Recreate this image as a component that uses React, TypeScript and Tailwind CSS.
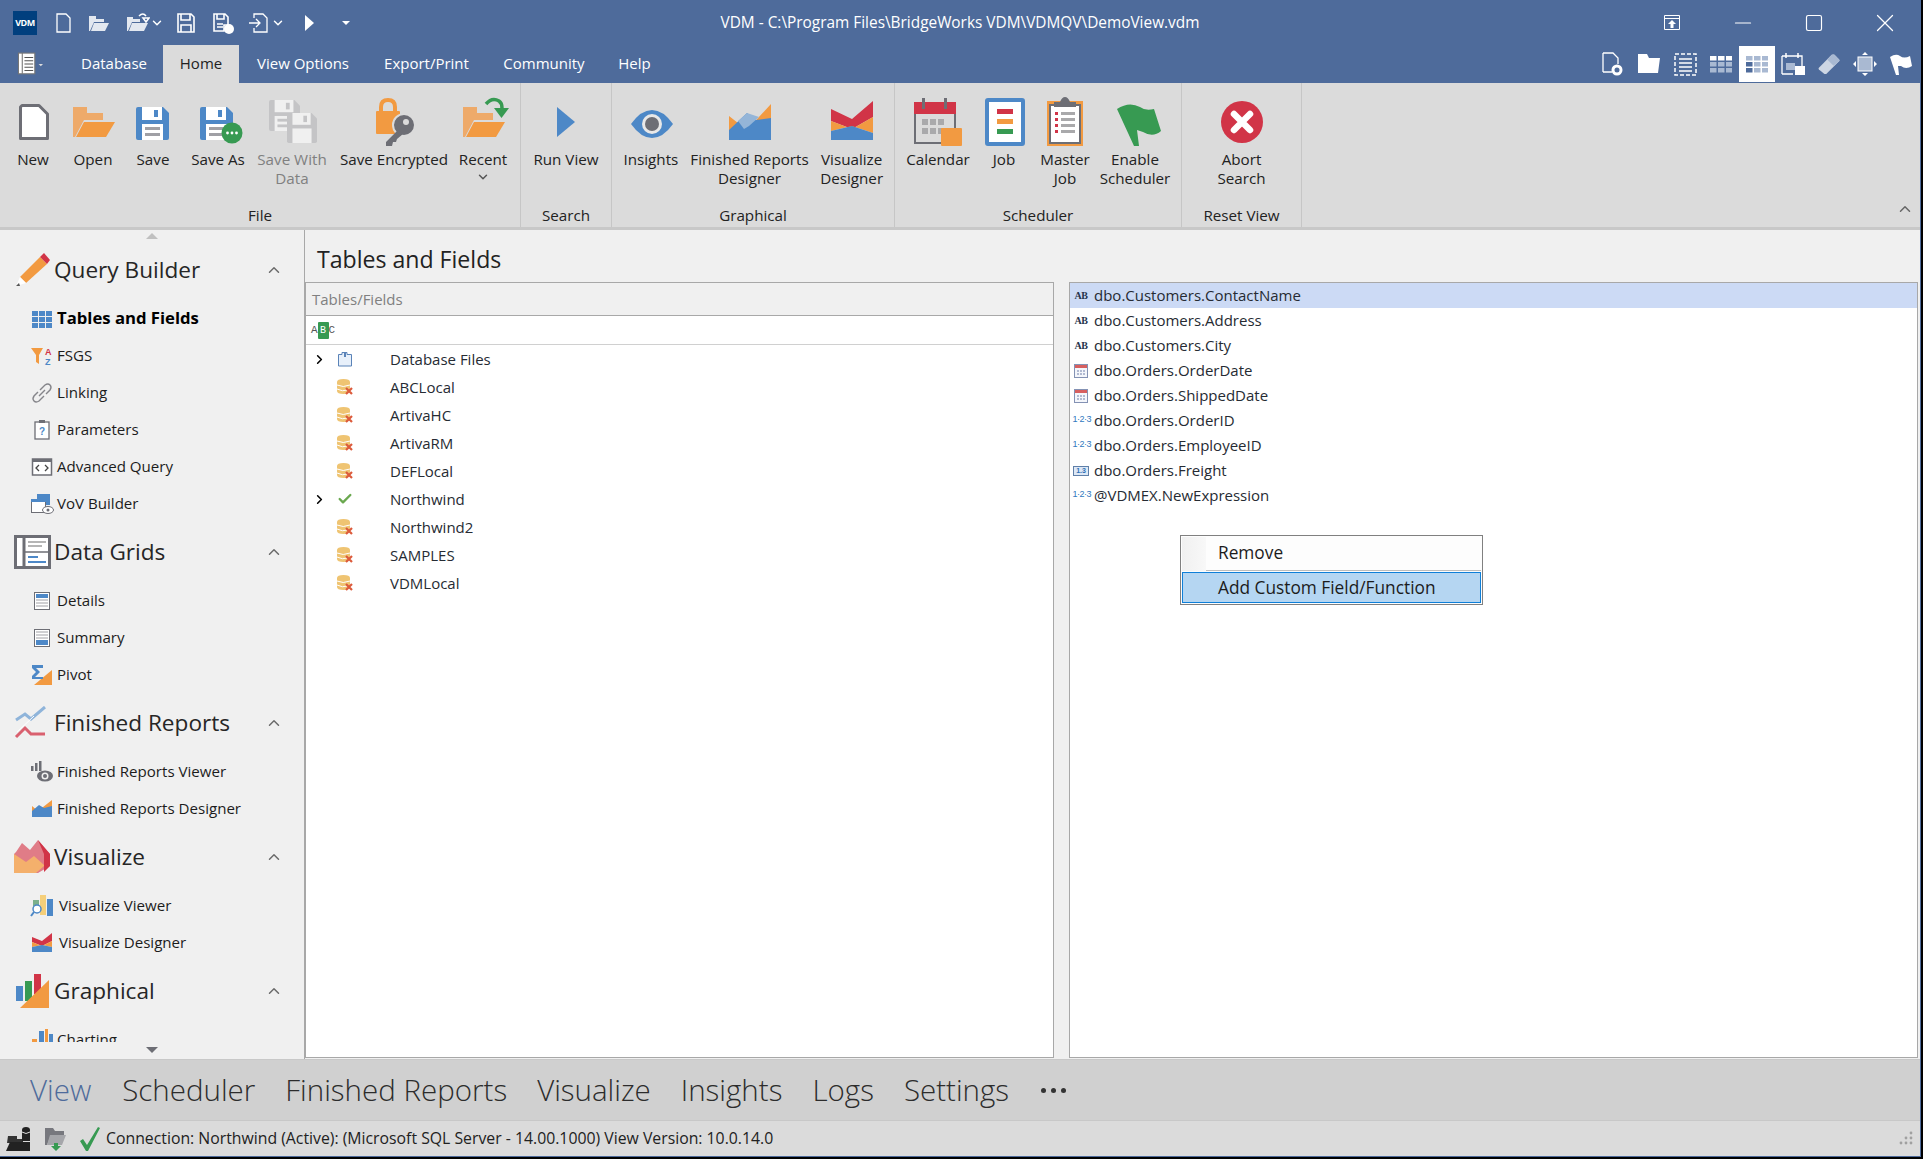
import { ReactNode } from "react";
import { ChevronDown, ChevronRight, ChevronUp, Check, Minus, Square, X } from "lucide-react";

const BLUE = "#4d88c7";
const ORANGE = "#f29a41";
const RED = "#d13447";
const GREEN = "#379a52";
const GRAY = "#6d6e75";

// floppy shape reused by the save icons
function Floppy({ x, y, s, fill, inner = "#fff", bar = "#a0a0a5" }: { x: number; y: number; s: number; fill: string; inner?: string; bar?: string }) {
  const u = s / 33;
  return (
    <g transform={`translate(${x} ${y}) scale(${u})`}>
      <path d="M2 0H27L33 6V31Q33 33 31 33H2Q0 33 0 31V2Q0 0 2 0Z" fill={fill} />
      <rect x="6" y="0" width="20" height="13" fill={inner} />
      <rect x="18" y="3" width="4" height="7" fill={fill} />
      <rect x="6" y="17" width="21" height="16" fill={inner} />
      <rect x="9" y="20" width="15" height="3" fill={bar} />
      <rect x="9" y="26" width="15" height="3" fill={bar} />
    </g>
  );
}

function FolderBig() {
  return (
    <>
      <path d="M8 14H22V20H38V27H19L10 44H8Z" fill="#eeaa6a" />
      <path d="M19 29H50L41 44H11Z" fill={ORANGE} />
    </>
  );
}

const ribbonIcons: Record<string, ReactNode> = {
  new: <path d="M17 12.5H34L42.5 21V45.5H15.5V14Z" fill="#fff" stroke={GRAY} strokeWidth="3" strokeLinejoin="round" />,
  open: <FolderBig />,
  save: <Floppy x={11} y={14} s={33} fill={BLUE} />,
  saveAs: (
    <>
      <Floppy x={10} y={14} s={33} fill={BLUE} />
      <circle cx="42" cy="40" r="10.5" fill={GREEN} />
      <circle cx="37.5" cy="40" r="1.4" fill="#fff" />
      <circle cx="42" cy="40" r="1.4" fill="#fff" />
      <circle cx="46.5" cy="40" r="1.4" fill="#fff" />
    </>
  ),
  saveData: (
    <>
      <Floppy x={5} y={7} s={31} fill="#c4c4c6" inner="#f0f0f0" bar="#c4c4c6" />
      <Floppy x={23} y={20} s={30} fill="#c4c4c6" inner="#f0f0f0" bar="#f0f0f0" />
    </>
  ),
  encrypted: (
    <>
      <path d="M15 19V14Q15 7 22 7Q29 7 29 14V19" fill="none" stroke={ORANGE} strokeWidth="4" />
      <rect x="10" y="18" width="24" height="23" rx="1" fill={ORANGE} />
      <circle cx="38" cy="32" r="11" fill={GRAY} stroke="#dbdbdb" strokeWidth="2" />
      <path d="M32 37L20 49V53H26L27 49H30L31 46L37 41Z" fill={GRAY} />
      <circle cx="40" cy="29" r="3" fill="#dbdbdb" />
    </>
  ),
  recent: (
    <>
      <FolderBig />
      <path d="M31 11Q37 4 44 8Q47 10 47 15" fill="none" stroke={GREEN} strokeWidth="3.5" />
      <path d="M39 15H54L46.5 25Z" fill={GREEN} />
    </>
  ),
  run: <path d="M19 14L37 29L19 44Z" fill={BLUE} />,
  insights: (
    <>
      <path d="M8 31Q18 17 29 17Q40 17 50 31Q40 45 29 45Q18 45 8 31Z" fill={BLUE} />
      <circle cx="29" cy="31" r="10" fill="#e8e8e8" />
      <circle cx="29" cy="31" r="7" fill={GRAY} />
    </>
  ),
  report: (
    <>
      <path d="M7 23L25 37L49 11V47H7Z" fill={ORANGE} />
      <path d="M7 37L25 20L34 27L49 25V47H7Z" fill={BLUE} />
      <path d="M16 28L25 20L37 24L27 33L22 36Z" fill="#94b5d8" />
    </>
  ),
  visualize: (
    <>
      <path d="M7 16L28 26L49 8V24L28 36L7 28Z" fill={RED} />
      <path d="M7 28L28 36L49 24V40L28 33L7 38Z" fill={ORANGE} />
      <path d="M7 38L28 33L49 40V47H7Z" fill={BLUE} />
    </>
  ),
  calendar: (
    <>
      <rect x="5" y="10" width="40" height="40" fill="#dbdbdb" stroke={GRAY} strokeWidth="2" />
      <rect x="4" y="9" width="42" height="12" fill={RED} />
      <rect x="12" y="5" width="3" height="11" fill={GRAY} />
      <rect x="34" y="5" width="3" height="11" fill={GRAY} />
      {[12, 20, 28].map((x) => (
        <g key={x}>
          <rect x={x} y="26" width="6" height="6" fill="#a9a9ab" />
          <rect x={x} y="35" width="6" height="6" fill="#a9a9ab" />
        </g>
      ))}
      <rect x="31" y="35" width="21" height="18" rx="1" fill={ORANGE} />
    </>
  ),
  job: (
    <>
      <rect x="11" y="7" width="36" height="44" rx="1" fill="#fff" stroke={BLUE} strokeWidth="4" />
      <rect x="21" y="16" width="16" height="5" fill={RED} />
      <rect x="21" y="26" width="16" height="5" fill={ORANGE} />
      <rect x="21" y="36" width="16" height="5" fill={GREEN} />
    </>
  ),
  master: (
    <>
      <rect x="10" y="8" width="36" height="45" fill={ORANGE} />
      <rect x="13" y="12" width="30" height="38" fill="#fff" stroke={GRAY} strokeWidth="2" />
      <path d="M17 14V9H23Q25 4 28 4Q31 4 33 9H39V14Z" fill={GRAY} />
      {[19, 25, 31, 37].map((y) => (
        <g key={y}>
          <rect x="18" y={y} width="3" height="3" fill={RED} />
          <rect x="24" y={y} width="14" height="3" fill="#a9a9ab" />
        </g>
      ))}
    </>
  ),
  flag: (
    <path d="M10 16Q22 8 33 14Q38 18 47 16L54 38Q46 45 36 39L30 37L32 53H27Z" fill={GREEN} />
  ),
  abort: (
    <>
      <ellipse cx="28" cy="29" rx="21" ry="21" fill={RED} />
      <path d="M20 21L36 37M36 21L20 37" stroke="#fff" strokeWidth="6.5" strokeLinecap="round" />
    </>
  ),
};

const ribbonGroups = [
  {
    name: "File",
    w: "w-[521px]",
    pl: "pl-[3px]",
    buttons: [
      { icon: "new", w: "w-[60px]", label: ["New"] },
      { icon: "open", w: "w-[60px]", label: ["Open"] },
      { icon: "save", w: "w-[60px]", label: ["Save"] },
      { icon: "saveAs", w: "w-[70px]", label: ["Save As"] },
      { icon: "saveData", w: "w-[78px]", label: ["Save With", "Data"], disabled: true },
      { icon: "encrypted", w: "w-[126px]", label: ["Save Encrypted"] },
      { icon: "recent", w: "w-[52px]", label: ["Recent"], menu: true },
    ],
  },
  { name: "Search", w: "w-[91px]", pl: "", buttons: [{ icon: "run", w: "w-[90px]", label: ["Run View"] }] },
  {
    name: "Graphical",
    w: "w-[283px]",
    pl: "",
    buttons: [
      { icon: "insights", w: "w-[78px]", label: ["Insights"] },
      { icon: "report", w: "w-[120px]", label: ["Finished Reports", "Designer"] },
      { icon: "visualize", w: "w-[85px]", label: ["Visualize", "Designer"] },
    ],
  },
  {
    name: "Scheduler",
    w: "w-[287px]",
    pl: "",
    buttons: [
      { icon: "calendar", w: "w-[86px]", label: ["Calendar"] },
      { icon: "job", w: "w-[46px]", label: ["Job"] },
      { icon: "master", w: "w-[76px]", label: ["Master", "Job"] },
      { icon: "flag", w: "w-[64px]", label: ["Enable", "Scheduler"] },
    ],
  },
  { name: "Reset View", w: "w-[120px]", pl: "", buttons: [{ icon: "abort", w: "w-[120px]", label: ["Abort", "Search"] }] },
];

function QatIcon({ w, children }: { w: string; children: ReactNode }) {
  return (
    <svg viewBox="0 0 24 24" className={`${w} h-[24px] shrink-0`}>
      {children}
    </svg>
  );
}

function TitleBar() {
  return (
    <div className="grid h-[45px] grid-cols-[1fr_auto_1fr] items-center bg-[#4e6b9b] text-white">
      <div className="flex items-center pl-[13px]">
        <div className="flex h-[24px] w-[24px] items-center justify-center bg-[#013f7e] text-[9px] font-bold tracking-tighter">VDM</div>
        <div className="ml-[14px] flex items-center">
          <QatIcon w="w-[24px]">
            <path d="M6 3H15L19 7V21H6Z" fill="none" stroke="#fff" strokeWidth="1.3" />
          </QatIcon>
          <QatIcon w="w-[24px] ml-[12px]">
            <path d="M2 5H9V8H17V11H7L3 20H2Z M7 12H22L18 20H4Z" fill="#e3e8f0" />
          </QatIcon>
          <QatIcon w="w-[24px] ml-[15px]">
            <path d="M1 6H7V8H14V11H6L2 20H1Z M6 12H22L18 20H3Z" fill="#e3e8f0" />
            <path d="M13 5Q17 1 20 5M17 7H23L20 11Z" fill="none" stroke="#fff" strokeWidth="1.5" />
          </QatIcon>
          <ChevronDown className="h-[14px] w-[14px]" strokeWidth={2.5} />
          <QatIcon w="w-[24px] ml-[10px]">
            <path d="M4 3H17L20 6V21H4Z M7 3V9H16V3 M7 14V21H17V14Z" fill="none" stroke="#fff" strokeWidth="1.6" />
          </QatIcon>
          <QatIcon w="w-[24px] ml-[13px]">
            <path d="M3 3H14L17 6V14H13V20H3Z M6 3V8H13V3 M6 13H12 M6 16H12" fill="none" stroke="#fff" strokeWidth="1.6" />
            <circle cx="18" cy="18" r="5" fill="#fff" />
          </QatIcon>
          <QatIcon w="w-[24px] ml-[12px]">
            <path d="M7 7V3H16L20 7V21H7V17 M2 12H12M9 8L13 12L9 16" fill="none" stroke="#fff" strokeWidth="1.3" />
          </QatIcon>
          <ChevronDown className="h-[14px] w-[14px]" strokeWidth={2.5} />
          <QatIcon w="w-[24px] ml-[12px]">
            <path d="M8 4L17 12L8 20Z" fill="#fff" />
          </QatIcon>
          <QatIcon w="w-[24px] ml-[13px]">
            <path d="M8 10H16L12 14Z" fill="#fff" />
          </QatIcon>
        </div>
      </div>
      <div className="text-[15.4px] leading-none">VDM - C:\Program Files\BridgeWorks VDM\VDMQV\DemoView.vdm</div>
      <div className="flex items-center justify-end">
        <div className="flex w-[71px] justify-center">
          <svg viewBox="0 0 16 15" className="h-[15px] w-[16px]">
            <path d="M.5.5H15.5V14.5H.5ZM.5 3.5H15.5" fill="none" stroke="#fff" />
            <path d="M8 5L12 9H9.5V13H6.5V9H4Z" fill="#fff" />
          </svg>
        </div>
        <div className="flex w-[71px] justify-center">
          <Minus className="h-[26px] w-[26px]" strokeWidth={1} />
        </div>
        <div className="flex w-[71px] justify-center">
          <Square className="h-[20px] w-[20px]" strokeWidth={1.4} />
        </div>
        <div className="flex w-[71px] justify-center">
          <X className="h-[30px] w-[30px]" strokeWidth={1} />
        </div>
      </div>
    </div>
  );
}

const tabs = [
  { name: "Database", w: "w-[98px]" },
  { name: "Home", w: "w-[76px]", active: true },
  { name: "View Options", w: "w-[128px]" },
  { name: "Export/Print", w: "w-[119px]" },
  { name: "Community", w: "w-[116px]" },
  { name: "Help", w: "w-[65px]" },
];

function GridGlyph({ active }: { active?: boolean }) {
  const cols = [0, 8, 16];
  const rows = [0, 6, 12];
  return (
    <svg viewBox="0 0 22 17" className="h-[17px] w-[22px]">
      {rows.map((y, r) =>
        cols.map((x, c) => (
          <rect
            key={`${r}-${c}`}
            x={x}
            y={y}
            width="6.5"
            height="4.5"
            fill={active ? (c === 0 && r > 0 ? "#4e6b9b" : "#a9b9d2") : r === 0 ? "#fff" : "#a9b9d2"}
          />
        )),
      )}
    </svg>
  );
}

function TabRow() {
  return (
    <div className="flex h-[38px] items-stretch bg-[#4e6b9b]">
      <div className="flex w-[65px] items-center pl-[17px]">
        <svg viewBox="0 0 24 22" className="h-[24px] w-[28px]">
          <rect x="0.5" y="1" width="15" height="19" fill="#fff" stroke="#777" />
          <path d="M4 1V20" stroke="#777" />
          <path d="M6 5H14M6 8H14M6 11H14M6 14H14M6 17H14" stroke="#555" />
          <path d="M19 11H23L21 13Z" fill="#ddd" />
        </svg>
      </div>
      {tabs.map((t) => (
        <div
          key={t.name}
          className={`flex items-center justify-center pb-[1px] text-[15px] ${t.w} ${t.active ? "bg-[#dbdbdb] text-[#222]" : "text-white"}`}
        >
          {t.name}
        </div>
      ))}
      <div className="ml-auto flex items-center pr-[1px]">
        <div className="flex h-[36px] w-[36px] items-center justify-center">
          <svg viewBox="0 0 22 24" className="h-[24px] w-[22px]">
            <path d="M1 1H11L16 6V12M10 20H1Z" fill="none" stroke="#fff" strokeWidth="1.3" />
            <path d="M1 1V20" stroke="#fff" strokeWidth="1.3" />
            <circle cx="15" cy="18" r="4" fill="none" stroke="#fff" strokeWidth="3" />
          </svg>
        </div>
        <div className="flex h-[36px] w-[36px] items-center justify-center">
          <svg viewBox="0 0 22 20" className="h-[20px] w-[22px]">
            <path d="M0 0H9L11 4H22L20 19H0Z" fill="#fff" />
          </svg>
        </div>
        <div className="flex h-[36px] w-[36px] items-center justify-center">
          <svg viewBox="0 0 23 23" className="h-[23px] w-[23px]">
            <rect x="1" y="1" width="21" height="21" fill="none" stroke="#fff" strokeWidth="1.5" strokeDasharray="4 2" />
            <path d="M5 6H18M5 10H18M5 14H18M5 18H18" stroke="#fff" strokeWidth="1.5" />
          </svg>
        </div>
        <div className="flex h-[36px] w-[36px] items-center justify-center">
          <GridGlyph />
        </div>
        <div className="flex h-[36px] w-[36px] items-center justify-center bg-white">
          <GridGlyph active />
        </div>
        <div className="flex h-[36px] w-[36px] items-center justify-center">
          <svg viewBox="0 0 24 24" className="h-[24px] w-[24px]">
            <path d="M1 4H21V15M12 22H1Z" fill="none" stroke="#fff" strokeWidth="1.3" />
            <path d="M1 4V22" stroke="#fff" strokeWidth="1.3" />
            <path d="M5 1V6M17 1V6" stroke="#fff" strokeWidth="1.5" />
            <rect x="5" y="11" width="9" height="7" fill="#a9b9d2" />
            <rect x="14" y="14" width="10" height="9" fill="#fff" />
          </svg>
        </div>
        <div className="flex h-[36px] w-[36px] items-center justify-center">
          <svg viewBox="0 0 24 24" className="h-[22px] w-[22px]">
            <path d="M1 16L15 2Q17 1 18 2L23 7Q24 8 23 9L9 23Q8 23 7 23L1 18Q0 17 1 16Z" fill="#cdd6e4" />
            <path d="M15 2Q17 1 18 2L23 7Q24 8 23 9L17 14L10 7Z" fill="#a9b9d2" />
          </svg>
        </div>
        <div className="flex h-[36px] w-[36px] items-center justify-center">
          <svg viewBox="0 0 24 24" className="h-[24px] w-[24px]">
            <rect x="5" y="5" width="14" height="14" fill="#a9b9d2" stroke="#fff" />
            <path d="M12 0L9 3H15ZM12 24L9 21H15ZM0 12L3 9V15ZM24 12L21 9V15Z" fill="#fff" />
          </svg>
        </div>
        <div className="flex h-[36px] w-[36px] items-center justify-center">
          <svg viewBox="0 0 22 22" className="h-[22px] w-[22px]">
            <path d="M0 4Q6 0 10 3Q14 6 20 3L22 13Q16 17 11 13L8 13L9 22H6Z" fill="#fff" />
          </svg>
        </div>
      </div>
    </div>
  );
}

function Ribbon() {
  return (
    <div className="relative flex h-[147px] border-b-[3px] border-[#c8c8c8] bg-[#dbdbdb] text-[15.2px] text-[#222]">
      {ribbonGroups.map((g) => (
        <div key={g.name} className={`flex flex-col border-r border-[#c6c6c6] ${g.w}`}>
          <div className={`flex flex-1 pt-[10px] ${g.pl}`}>
            {g.buttons.map((b) => {
              const disabled = "disabled" in b && b.disabled;
              const menu = "menu" in b && b.menu;
              return (
                <div key={b.icon} className={`flex flex-col items-center ${b.w}`}>
                  <svg viewBox="0 0 56 56" className="h-[56px] w-[56px] shrink-0 overflow-visible">
                    {ribbonIcons[b.icon]}
                  </svg>
                  <div className={`mt-[1px] whitespace-nowrap text-center leading-[19px] ${disabled ? "text-[#808080]" : ""}`}>
                    {b.label.map((l) => (
                      <div key={l}>{l}</div>
                    ))}
                    {menu && <ChevronDown className="mx-auto mt-[1px] h-[14px] w-[14px] text-[#555]" strokeWidth={2.5} />}
                  </div>
                </div>
              );
            })}
          </div>
          <div className="flex h-[22px] items-center justify-center leading-none">{g.name}</div>
        </div>
      ))}
      <ChevronUp className="absolute bottom-[9px] right-[6px] h-[18px] w-[18px] text-[#666]" strokeWidth={2} />
    </div>
  );
}

const sideIcons: Record<string, ReactNode> = {
  pencil: (
    <>
      <path d="M6 24L26 4L33 11L12 30Z" fill={ORANGE} />
      <path d="M26 4L30 0L36 7L33 11Z" fill={RED} />
      <path d="M6 24L12 30L2 33Z" fill="#fff" />
      <path d="M2 33L5 30L6 33Z" fill="#555" />
    </>
  ),
  grids: (
    <>
      <rect x="1.5" y="1.5" width="34" height="31" fill="#fff" stroke={GRAY} strokeWidth="3" />
      <path d="M10 1V33" stroke={GRAY} strokeWidth="3" />
      <path d="M14 7H32M14 11H28" stroke="#b5b5b5" strokeWidth="2" />
      <path d="M10 17H36" stroke={GRAY} strokeWidth="1.5" />
      <path d="M14 22H24" stroke={BLUE} strokeWidth="2" />
      <path d="M14 27H32" stroke={BLUE} strokeWidth="2" />
    </>
  ),
  trend: (
    <>
      <path d="M2 14L11 8L17 13L31 1" fill="none" stroke="#8fb4da" strokeWidth="3" />
      <path d="M2 31L11 22L17 28H31" fill="none" stroke="#d9606f" strokeWidth="3" />
      <path d="M3 26L20 10" stroke="#fff" strokeWidth="1" />
    </>
  ),
  viz: (
    <>
      <path d="M2 12L8 3L16 10L24 0L36 14L36 26L24 33H0V14Z" fill="#e07c87" />
      <path d="M24 0L36 14V26L30 32V14Z" fill={RED} />
      <path d="M0 14L12 22L20 16L30 25V26L22 33H0Z" fill="#f4b06c" />
    </>
  ),
  graphical: (
    <>
      <rect x="2" y="12" width="7" height="15" fill={BLUE} />
      <rect x="11" y="7" width="7" height="20" fill={GREEN} />
      <rect x="20" y="0" width="7" height="20" fill={RED} />
      <path d="M35 6V34H6Z" fill={ORANGE} />
    </>
  ),
};

const smallIcons: Record<string, ReactNode> = {
  tables: (
    <>
      {[4, 10, 16].map((y) =>
        [2, 9, 16].map((x) => <rect key={`${x}-${y}`} x={x} y={y} width="6" height="5" fill={BLUE} />),
      )}
    </>
  ),
  fsgs: (
    <>
      <path d="M1 4H13L9 11V20L6 18V11Z" fill={ORANGE} />
      <text x="15" y="11" fontSize="9" fontWeight="bold" fill={RED} fontFamily="Liberation Sans">A</text>
      <text x="15" y="21" fontSize="9" fontWeight="bold" fill={BLUE} fontFamily="Liberation Sans">Z</text>
    </>
  ),
  link: (
    <path d="M10 9L15 4Q18 2 20 4Q22 6 20 9L16 13M14 15L9 20Q6 22 4 20Q2 18 4 15L8 11M9 15L15 9" fill="none" stroke="#85858a" strokeWidth="1.4" />
  ),
  params: (
    <>
      <rect x="5" y="4" width="14" height="17" fill="#fff" stroke={GRAY} strokeWidth="1.3" />
      <rect x="9" y="2" width="6" height="3" fill={GRAY} />
      <text x="9" y="17" fontSize="10" fontWeight="bold" fill={BLUE} fontFamily="Liberation Sans">?</text>
    </>
  ),
  advanced: (
    <>
      <rect x="2.5" y="4" width="19" height="16" fill="#fff" stroke={GRAY} strokeWidth="1.5" />
      <rect x="2.5" y="4" width="19" height="3" fill={GRAY} />
      <path d="M9 10L6 13L9 16M15 10L18 13L15 16" fill="none" stroke="#444" strokeWidth="1.3" />
    </>
  ),
  vov: (
    <>
      <rect x="7" y="2" width="13" height="11" fill={BLUE} />
      <rect x="1.5" y="7.5" width="14" height="13" fill="#fff" stroke={GRAY} />
      <rect x="1" y="7" width="15" height="3" fill={BLUE} />
      <ellipse cx="18" cy="18" rx="5.5" ry="3.5" fill="#fff" stroke={GRAY} />
      <circle cx="18" cy="18" r="1.5" fill={GRAY} />
    </>
  ),
  details: (
    <>
      <rect x="4.5" y="3.5" width="15" height="17" fill="#fff" stroke={GRAY} />
      <rect x="6" y="5" width="12" height="4" fill={BLUE} />
      <path d="M6 11H18M6 14H18M6 17H18" stroke="#a0a0a5" />
    </>
  ),
  summary: (
    <>
      <rect x="4.5" y="3.5" width="15" height="17" fill="#fff" stroke={GRAY} />
      <path d="M6 6H18M6 9H18M6 12H18" stroke="#a0a0a5" />
      <rect x="6" y="14" width="12" height="5" fill={BLUE} />
    </>
  ),
  pivot: (
    <>
      <path d="M22 7V22H4Z" fill={ORANGE} />
      <path d="M2 2H13V5H6L10 9L5 14H13V16H2V13L6 9L2 5Z" fill={BLUE} />
    </>
  ),
  viewer: (
    <>
      <rect x="1" y="6" width="2.5" height="5" fill={GRAY} />
      <rect x="5" y="3" width="2.5" height="8" fill={GRAY} />
      <rect x="9" y="1" width="2.5" height="10" fill={GRAY} />
      <ellipse cx="15" cy="16" rx="8" ry="5.5" fill={GRAY} />
      <circle cx="15" cy="16" r="3.5" fill="#f0f0f0" />
      <circle cx="15" cy="16" r="2" fill={GRAY} />
    </>
  ),
  designer: (
    <>
      <path d="M2 9L8 14L22 3V20H2Z" fill={ORANGE} />
      <path d="M2 14L9 8L14 11L22 9V20H2Z" fill={BLUE} />
    </>
  ),
  vizViewer: (
    <>
      <rect x="3" y="6" width="6" height="10" fill="#7bb08c" />
      <rect x="10" y="1" width="6" height="20" fill="#f5cf7a" />
      <rect x="17" y="5" width="6" height="17" fill={BLUE} />
      <circle cx="7" cy="15" r="4" fill="#fff" stroke={BLUE} strokeWidth="1.5" />
      <path d="M4 18L1 22" stroke={BLUE} strokeWidth="2" />
    </>
  ),
  vizDesigner: (
    <>
      <path d="M2 6L12 10L22 2V10L12 15L2 11Z" fill={RED} />
      <path d="M2 11L12 15L22 10V16L12 14L2 16Z" fill={ORANGE} />
      <path d="M2 16L12 14L22 16V21H2Z" fill={BLUE} />
    </>
  ),
  charting: (
    <>
      <rect x="2" y="11" width="5" height="10" fill={ORANGE} />
      <rect x="9" y="3" width="5" height="18" fill={BLUE} />
      <rect x="15" y="1" width="3" height="20" fill={ORANGE} />
      <rect x="19" y="6" width="4" height="15" fill={BLUE} />
    </>
  ),
};

const sideGroups = [
  {
    title: "Query Builder",
    icon: "pencil",
    items: [
      { label: "Tables and Fields", icon: "tables", bold: true },
      { label: "FSGS", icon: "fsgs" },
      { label: "Linking", icon: "link" },
      { label: "Parameters", icon: "params" },
      { label: "Advanced Query", icon: "advanced" },
      { label: "VoV Builder", icon: "vov" },
    ],
  },
  {
    title: "Data Grids",
    icon: "grids",
    items: [
      { label: "Details", icon: "details" },
      { label: "Summary", icon: "summary" },
      { label: "Pivot", icon: "pivot" },
    ],
  },
  {
    title: "Finished Reports",
    icon: "trend",
    items: [
      { label: "Finished Reports Viewer", icon: "viewer" },
      { label: "Finished Reports Designer", icon: "designer" },
    ],
  },
  {
    title: "Visualize",
    icon: "viz",
    items: [
      { label: "Visualize Viewer", icon: "vizViewer", wide: true },
      { label: "Visualize Designer", icon: "vizDesigner", wide: true },
    ],
  },
  {
    title: "Graphical",
    icon: "graphical",
    items: [{ label: "Charting", icon: "charting" }],
  },
];

function Sidebar() {
  return (
    <aside className="flex w-[305px] shrink-0 flex-col border-r border-[#a8a8a8] bg-[#f0f0f0] text-[#1c1c1c]">
      <div className="flex h-[10px] justify-center pt-[3px]">
        <div className="h-0 w-0 border-x-[6px] border-b-[6px] border-x-transparent border-b-[#c0c0c0]" />
      </div>
      <div className="min-h-0 flex-1 overflow-hidden">
        {sideGroups.map((g) => (
          <div key={g.title}>
            <div className="flex h-[60px] items-center pl-[14px] pr-[21px]">
              <svg viewBox="0 0 37 34" className="h-[34px] w-[37px] shrink-0">
                {sideIcons[g.icon]}
              </svg>
              <span className="ml-[3px] text-[22.6px] leading-none text-[#262626]">{g.title}</span>
              <ChevronUp className="ml-auto h-[18px] w-[18px] text-[#6b6b6b]" strokeWidth={2} />
            </div>
            {g.items.map((it) => (
              <div key={it.label} className="flex h-[37px] items-center pl-[30px] text-[15.1px]">
                <svg viewBox="0 0 24 24" className="h-[24px] w-[24px] shrink-0">
                  {smallIcons[it.icon]}
                </svg>
                <span className={`${"wide" in it ? "ml-[5px]" : "ml-[3px]"} ${"bold" in it ? "text-[16.7px] font-bold leading-none text-black" : ""}`}>{it.label}</span>
              </div>
            ))}
          </div>
        ))}
      </div>
      <div className="flex h-[17px] justify-center pt-[5px]">
        <div className="h-0 w-0 border-x-[6px] border-t-[6px] border-x-transparent border-t-[#6d6e75]" />
      </div>
    </aside>
  );
}

const databases = [
  { name: "Database Files", kind: "files", expand: true },
  { name: "ABCLocal", kind: "db" },
  { name: "ArtivaHC", kind: "db" },
  { name: "ArtivaRM", kind: "db" },
  { name: "DEFLocal", kind: "db" },
  { name: "Northwind", kind: "ok", expand: true },
  { name: "Northwind2", kind: "db" },
  { name: "SAMPLES", kind: "db" },
  { name: "VDMLocal", kind: "db" },
];

function TreeIcon({ kind }: { kind: string }) {
  if (kind === "ok") return <Check className="h-[16px] w-[16px] text-[#6aa84f]" strokeWidth={3.5} />;
  if (kind === "files") {
    return (
      <svg viewBox="0 0 16 16" className="h-[16px] w-[16px]">
        <path d="M1.5 3.5H5V1.5H10V3.5H14.5V15H1.5Z" fill="#e8f0fa" stroke="#5a83b8" />
        <path d="M7 1V6H9V1" fill="#5a83b8" />
      </svg>
    );
  }
  return (
    <svg viewBox="0 0 16 16" className="h-[16px] w-[16px]">
      <path d="M0 3Q0 0 6.5 0Q13 0 13 3V12Q13 15 6.5 15Q0 15 0 12Z" fill="#efc472" />
      <path d="M0 6Q6 9 13 6M0 10Q6 13 10 11" fill="none" stroke="#fff" />
      <path d="M9 9L15 15M15 9L9 15" stroke="#dc5b3c" strokeWidth="2.2" />
    </svg>
  );
}

const fields = [
  { name: "dbo.Customers.ContactName", kind: "ab", selected: true },
  { name: "dbo.Customers.Address", kind: "ab" },
  { name: "dbo.Customers.City", kind: "ab" },
  { name: "dbo.Orders.OrderDate", kind: "date" },
  { name: "dbo.Orders.ShippedDate", kind: "date" },
  { name: "dbo.Orders.OrderID", kind: "int" },
  { name: "dbo.Orders.EmployeeID", kind: "int" },
  { name: "dbo.Orders.Freight", kind: "dec" },
  { name: "@VDMEX.NewExpression", kind: "int" },
];

function FieldIcon({ kind }: { kind: string }) {
  if (kind === "ab") {
    return <span className="w-[16px] text-center font-['Liberation_Serif',serif] text-[10px] font-bold leading-none tracking-tighter text-[#26344d]">AB</span>;
  }
  if (kind === "int") {
    return <span className="-mt-[3px] w-[17px] whitespace-nowrap text-center font-['Liberation_Sans',sans-serif] text-[9px] leading-none tracking-[-0.5px] text-[#2f78c0]">1·2·3</span>;
  }
  if (kind === "dec") {
    return (
      <span className="flex h-[10px] w-[16px] items-center justify-center border border-[#5f7fa8] bg-[#dde8f6] font-['Liberation_Sans',sans-serif] text-[7px] font-bold leading-none text-[#2f6fb5]">
        1.3
      </span>
    );
  }
  return (
    <svg viewBox="0 0 14 14" className="h-[14px] w-[14px]">
      <rect x="0.5" y="0.5" width="13" height="13" fill="#f4f6fb" stroke="#8492b4" />
      <rect x="1" y="1" width="12" height="3" fill="#d75f5f" />
      <path d="M3 7H5M6 7H8M9 7H11M3 10H5M6 10H8M9 10H11" stroke="#6f7fa8" />
    </svg>
  );
}

function Main() {
  return (
    <main className="flex min-w-0 flex-1 flex-col bg-[#f0f0f0]">
      <div className="flex h-[52px] items-center pl-[12px] pt-[6px] text-[23.1px] text-[#222]">Tables and Fields</div>
      <div className="flex min-h-0 flex-1 gap-[15px] pb-[1px] pr-[2px] text-[15px]">
        <section className="flex w-[749px] shrink-0 flex-col border border-[#a8a8a8] bg-white">
          <div className="flex h-[33px] items-center border-b border-[#a8a8a8] bg-[#f0f0f0] pl-[6px] text-[#808080]">Tables/Fields</div>
          <div className="flex h-[29px] items-center border-b border-[#d0d0d0] pl-[5px]">
            <span className="font-['Liberation_Mono',monospace] text-[11px] text-[#555]">A</span>
            <span className="flex h-[17px] w-[11px] items-center justify-center rounded-[1px] bg-[#379a52] font-['Liberation_Mono',monospace] text-[10px] text-white">B</span>
            <span className="font-['Liberation_Mono',monospace] text-[11px] text-[#555]">C</span>
          </div>
          <div>
            {databases.map((d) => (
              <div key={d.name} className="flex h-[28px] items-center text-[#262b33]">
                <div className="flex w-[25px] justify-center pl-[2px]">
                  {d.expand && <ChevronRight className="h-[15px] w-[15px] text-black" strokeWidth={2.5} />}
                </div>
                <div className="ml-[4px] flex w-[20px] justify-center">
                  <TreeIcon kind={d.kind} />
                </div>
                <span className="ml-[35px]">{d.name}</span>
              </div>
            ))}
          </div>
        </section>
        <section className="relative min-w-0 flex-1 border border-[#a8a8a8] bg-white">
          {fields.map((f) => (
            <div key={f.name} className={`flex h-[25px] items-center pl-[1px] text-[#262b33] ${f.selected ? "bg-[#ccdaf5]" : ""}`}>
              <div className="flex w-[20px] justify-center">
                <FieldIcon kind={f.kind} />
              </div>
              <span className="ml-[3px]">{f.name}</span>
            </div>
          ))}
          <div className="absolute left-[110px] top-[252px] w-[303px] border border-[#808080] bg-[#fdfdfd] p-[1px] text-[#1c1c1c]">
            <div className="flex h-[34px]">
              <div className="w-[24px] bg-gradient-to-r from-[#f0f0f0] to-[#f8f8f8]" />
              <div className="flex flex-1 items-center border-b border-[#bdbdbd] pb-[2px] pl-[12px] text-[17.3px]">Remove</div>
            </div>
            <div className="mt-[1px] flex h-[31px] items-center border border-[#0f7fd8] bg-[#b5d6f2] pl-[35px] pt-[1px] text-[17.3px]">Add Custom Field/Function</div>
          </div>
        </section>
      </div>
    </main>
  );
}

const bottomTabs = ["Scheduler", "Finished Reports", "Visualize", "Insights", "Logs", "Settings"];

function BottomNav() {
  return (
    <div className="flex h-[61px] items-center gap-[30px] border-t border-[#c8c8c8] bg-[#d0d0d0] pl-[30px] text-[29.5px] font-light leading-none text-[#2c2c2c]">
      <span className="mr-[1px] text-[#4e6b9b]">View</span>
      {bottomTabs.map((t) => (
        <span key={t}>{t}</span>
      ))}
      <span className="ml-[2px] flex gap-[5px]">
        <span className="h-[5px] w-[5px] rounded-full bg-[#333]" />
        <span className="h-[5px] w-[5px] rounded-full bg-[#333]" />
        <span className="h-[5px] w-[5px] rounded-full bg-[#333]" />
      </span>
    </div>
  );
}

function StatusBar() {
  return (
    <div className="flex h-[36px] items-center border-t border-[#c8c8c8] bg-[#dbdbdb] pl-[5px] text-[15.8px] text-[#222]">
      <svg viewBox="0 0 25 24" className="h-[24px] w-[25px]">
        <path d="M3 9H12V12H18V16H2Z" fill="#333" />
        <path d="M5 15H25V24H1Z" fill="#222" />
        <path d="M17 3Q17 0 21 0Q25 0 25 3V14H17Z" fill="#222" />
        <path d="M17 5Q21 8 25 5" stroke="#ddd" fill="none" />
      </svg>
      <svg viewBox="0 0 22 24" className="ml-[14px] h-[24px] w-[22px]">
        <path d="M1 1H9L11 4H20V8H7L3 18H1Z" fill="#77787e" />
        <path d="M6 8H22L18 18H3Z" fill="#a5a6aa" />
        <path d="M10 16H14V19H17L12 24L7 19H10Z" fill={GREEN} />
      </svg>
      <svg viewBox="0 0 22 26" className="ml-[13px] h-[26px] w-[22px]">
        <path d="M1 15L4 13L8 19L19 1L21 2L9 25H7Z" fill={GREEN} />
      </svg>
      <span className="ml-[5px]">Connection: Northwind (Active): (Microsoft SQL Server - 14.00.1000) View Version: 10.0.14.0</span>
      <svg viewBox="0 0 15 15" className="ml-auto mr-[6px] h-[15px] w-[15px]">
        {[
          [12, 2],
          [12, 7],
          [7, 7],
          [12, 12],
          [7, 12],
          [2, 12],
        ].map(([x, y]) => (
          <circle key={`${x}-${y}`} cx={x} cy={y} r="1.4" fill="#a0a0a0" />
        ))}
      </svg>
    </div>
  );
}

export default function App() {
  return (
    <div className="h-[1159px] w-[1923px] overflow-hidden bg-black font-['Open_Sans',sans-serif]">
      <div className="flex h-[1157px] w-[1921px] flex-col border-b border-r border-[#4e6b9b]">
        <TitleBar />
        <TabRow />
        <Ribbon />
        <div className="flex min-h-0 flex-1">
          <Sidebar />
          <Main />
        </div>
        <BottomNav />
        <StatusBar />
      </div>
    </div>
  );
}
